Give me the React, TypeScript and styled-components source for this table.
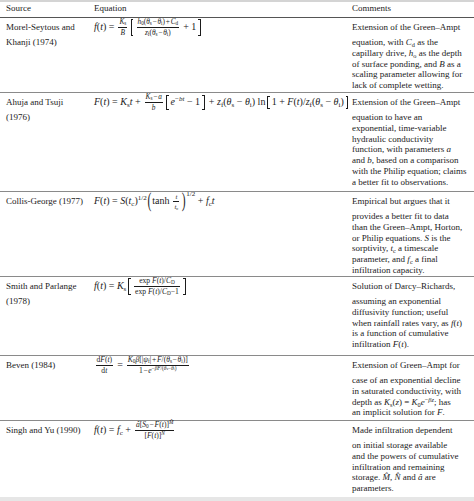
import React from "react";
import styled, { createGlobalStyle } from "styled-components";

const SERIF = `"Liberation Serif", "Times New Roman", "DejaVu Serif", serif`;

const GlobalStyle = createGlobalStyle`
  html, body { margin: 0; padding: 0; background: #fff; }
  body {
    font-family: ${SERIF};
    color: #1b1b1b;
  }
`;

const Table = styled.div`
  box-sizing: border-box;
  width: 474px;
  height: 501px;
  border-top: 2px solid #d4d4d4;
  border-bottom: 4px solid #e6e6e6;
  display: flex;
  flex-direction: column;
  font-family: ${SERIF};
  font-size: 9px;
  color: #1b1b1b;
  overflow: hidden;
`;

const Grid = styled.div`
  box-sizing: border-box;
  display: grid;
  grid-template-columns: 88px 258px 1fr;
  padding-left: 6px;
  flex: none;
`;

const HeaderRow = styled(Grid)`
  height: 16px;
  line-height: 13px;
  border-bottom: 1px solid #555;
`;

const Row = styled(Grid)<{ $h?: number; $last?: boolean }>`
  height: ${(p) => (p.$h ? `${p.$h}px` : "auto")};
  flex: ${(p) => (p.$last ? "1" : "none")};
  padding-top: 4px;
  border-bottom: ${(p) => (p.$last ? "none" : "1px solid #8a8a8a")};
`;

const Cell = styled.div`
  display: flex;
  flex-direction: column;
  min-width: 0;
`;

const Line = styled.div<{ $lead?: boolean }>`
  white-space: nowrap;
  line-height: ${(p) => (p.$lead ? "11px" : "10.8px")};
  margin-bottom: ${(p) => (p.$lead ? "4px" : "0")};
`;

const EqBox = styled.div`
  height: 11px;
  display: flex;
  align-items: center;
`;

const MathBox = styled.span`
  display: inline-block;
  white-space: nowrap;
  font-size: 10px;
  line-height: 1;
`;

const V = styled.i`
  font-style: italic;
`;

const Op = styled.span<{ $m?: number }>`
  margin: 0 ${(p) => p.$m ?? 2.5}px;
`;

const Sub = styled.span`
  font-size: 0.7em;
  line-height: 0;
  vertical-align: -0.28em;
  font-style: normal;
`;

const Sup = styled.span<{ $raise?: number }>`
  font-size: 0.7em;
  line-height: 0;
  vertical-align: ${(p) => p.$raise ?? 0.5}em;
  font-style: normal;
`;

const Frac = styled.span<{ $size?: number }>`
  display: inline-flex;
  flex-direction: column;
  align-items: stretch;
  text-align: center;
  vertical-align: middle;
  font-size: ${(p) => p.$size ?? 7.3}px;
  margin: 0 1.5px;
  line-height: 1.1;
`;

const Num = styled.span`
  padding: 0 1px 0.8px;
  border-bottom: 0.7px solid currentColor;
  white-space: nowrap;
`;

const Den = styled.span`
  padding: 0.8px 1px 0;
  white-space: nowrap;
`;

const Brk = styled.span<{ $l?: boolean; $h: number }>`
  display: inline-block;
  box-sizing: border-box;
  vertical-align: middle;
  width: 2.7px;
  height: ${(p) => p.$h}px;
  border-top: 0.8px solid currentColor;
  border-bottom: 0.8px solid currentColor;
  border-left: ${(p) => (p.$l ? "0.9px solid currentColor" : "none")};
  border-right: ${(p) => (p.$l ? "none" : "0.9px solid currentColor")};
  margin: 0 1.8px;
`;

const BigParen = styled.span`
  display: inline-block;
  vertical-align: middle;
  font-size: 11.5px;
  line-height: 1;
  transform: scaleY(1.75);
  margin: 0 0.8px;
`;

const Small = styled.span`
  font-size: 0.72em;
`;

const Ks = () => (
  <>
    <V>K</V>
    <Sub>s</Sub>
  </>
);

const ThetaDiff = ({ m }: { m?: number }) => (
  <>
    (<V>θ</V>
    <Sub>s</Sub>
    <Op $m={m}>−</Op>
    <V>θ</V>
    <Sub>i</Sub>)
  </>
);

const Ft = ({ big }: { big?: boolean }) => (
  <>
    <V>{big ? "F" : "f"}</V>(<V>t</V>)
  </>
);

type RowData = {
  source: string[];
  eq: React.ReactNode;
  comments: React.ReactNode[];
  h?: number;
};

const rows: RowData[] = [
  {
    h: 75,
    source: ["Morel-Seytous and", "Khanji (1974)"],
    eq: (
      <MathBox>
        <Ft />
        <Op>=</Op>
        <Frac>
          <Num>
            <Ks />
          </Num>
          <Den>
            <V>B</V>
          </Den>
        </Frac>
        <Brk $l $h={17} />
        <Frac>
          <Num>
            <V>h</V>
            <Sub>0</Sub>
            <ThetaDiff m={0.8} />
            <Op $m={0.8}>+</Op>
            <V>C</V>
            <Sub>d</Sub>
          </Num>
          <Den>
            <V>z</V>
            <Sub>f</Sub>
            <ThetaDiff m={0.8} />
          </Den>
        </Frac>
        <Op>+</Op>1
        <Brk $h={17} />
      </MathBox>
    ),
    comments: [
      "Extension of the Green–Ampt",
      <>
        equation, with <V>C</V>
        <Sub>d</Sub> as the
      </>,
      <>
        capillary drive, <V>h</V>
        <Sub>o</Sub> as the depth
      </>,
      <>
        of surface ponding, and <V>B</V> as a
      </>,
      "scaling parameter allowing for",
      "lack of complete wetting.",
    ],
  },
  {
    h: 99,
    source: ["Ahuja and Tsuji", "(1976)"],
    eq: (
      <MathBox>
        <Ft big />
        <Op>=</Op>
        <Ks />
        <V>t</V>
        <Op>+</Op>
        <Frac>
          <Num>
            <Ks />
            <Op $m={0.8}>−</Op>
            <V>a</V>
          </Num>
          <Den>
            <V>b</V>
          </Den>
        </Frac>
        <Brk $l $h={15} />
        <V>e</V>
        <Sup>
          −<V>bt</V>
        </Sup>
        <Op>−</Op>1
        <Brk $h={15} />
        <Op>+</Op>
        <V>z</V>
        <Sub>f</Sub>
        <ThetaDiff /> ln
        <Brk $l $h={13} />
        1<Op>+</Op>
        <Ft big />/<V>z</V>
        <Sub>f</Sub>
        <ThetaDiff />
        <Brk $h={13} />
      </MathBox>
    ),
    comments: [
      "Extension of the Green–Ampt",
      "equation to have an",
      "exponential, time-variable",
      "hydraulic conductivity",
      <>
        function, with parameters <V>a</V>
      </>,
      <>
        and <V>b</V>, based on a comparison
      </>,
      "with the Philip equation; claims",
      "a better fit to observations.",
    ],
  },
  {
    h: 85,
    source: ["Collis-George (1977)"],
    eq: (
      <MathBox>
        <Ft big />
        <Op>=</Op>
        <V>S</V>(<V>t</V>
        <Sub>c</Sub>)<Sup $raise={0.55}>1/2</Sup>
        <BigParen>(</BigParen>
        tanh&nbsp;
        <Frac $size={6.8}>
          <Num>
            <V>t</V>
          </Num>
          <Den>
            <V>t</V>
            <Sub>c</Sub>
          </Den>
        </Frac>
        <BigParen>)</BigParen>
        <Sup $raise={1.2}>1/2</Sup>
        <Op>+</Op>
        <V>f</V>
        <Sub>c</Sub>
        <V>t</V>
      </MathBox>
    ),
    comments: [
      "Empirical but argues that it",
      "provides a better fit to data",
      "than the Green–Ampt, Horton,",
      <>
        or Philip equations. <V>S</V> is the
      </>,
      <>
        sorptivity, <V>t</V>
        <Sub>c</Sub> a timescale
      </>,
      <>
        parameter, and <V>f</V>
        <Sub>c</Sub> a final
      </>,
      "infiltration capacity.",
    ],
  },
  {
    h: 79,
    source: ["Smith and Parlange", "(1978)"],
    eq: (
      <MathBox>
        <Ft />
        <Op>=</Op>
        <Ks />
        <Brk $l $h={17} />
        <Frac $size={7.6}>
          <Num>
            exp <Ft big />/<V>C</V>
            <Sub>D</Sub>
          </Num>
          <Den>
            exp <Ft big />/<V>C</V>
            <Sub>D</Sub>−1
          </Den>
        </Frac>
        <Brk $h={17} />
      </MathBox>
    ),
    comments: [
      "Solution of Darcy–Richards,",
      "assuming an exponential",
      "diffusivity function; useful",
      <>
        when rainfall rates vary, as <Ft />
      </>,
      "is a function of cumulative",
      <>
        infiltration <Ft big />.
      </>,
    ],
  },
  {
    h: 65,
    source: ["Beven (1984)"],
    eq: (
      <MathBox>
        <Frac $size={7.6}>
          <Num>
            d<Ft big />
          </Num>
          <Den>
            d<V>t</V>
          </Den>
        </Frac>
        <Op>=</Op>
        <Frac $size={7.6}>
          <Num>
            <V>K</V>
            <Sub>0</Sub>
            <V>β</V>[|<V>ψ</V>
            <Sub>f</Sub>|<Op $m={0.6}>+</Op>
            <V>F</V>/<ThetaDiff m={0.6} />]
          </Num>
          <Den>
            1<Op $m={0.6}>−</Op>
            <V>e</V>
            <Sup>
              −<V>βF</V>/(<V>θ</V>
              <Small>s</Small>−<V>θ</V>
              <Small>i</Small>)
            </Sup>
          </Den>
        </Frac>
      </MathBox>
    ),
    comments: [
      "Extension of Green–Ampt for",
      "case of an exponential decline",
      "in saturated conductivity, with",
      <>
        depth as <V>K</V>
        <Sub>s</Sub>(<V>z</V>) = <V>K</V>
        <Sub>0</Sub>
        <V>e</V>
        <Sup>
          −<V>βz</V>
        </Sup>
        ; has
      </>,
      <>
        an implicit solution for <V>F</V>.
      </>,
    ],
  },
  {
    source: ["Singh and Yu (1990)"],
    eq: (
      <MathBox>
        <Ft />
        <Op>=</Op>
        <V>f</V>
        <Sub>c</Sub>
        <Op>+</Op>
        <Frac $size={7.6}>
          <Num>
            <V>â</V>[<V>S</V>
            <Sub>0</Sub>
            <Op $m={0.8}>−</Op>
            <Ft big />]
            <Sup>
              <V>{"M\u0302"}</V>
            </Sup>
          </Num>
          <Den>
            [<Ft big />]
            <Sup>
              <V>{"N\u0302"}</V>
            </Sup>
          </Den>
        </Frac>
      </MathBox>
    ),
    comments: [
      "Made infiltration dependent",
      "on initial storage available",
      "and the powers of cumulative",
      "infiltration and remaining",
      <>
        storage. <V>{"M\u0302"}</V>, <V>{"N\u0302"}</V> and <V>â</V> are
      </>,
      "parameters.",
    ],
  },
];

export default function App() {
  return (
    <>
      <GlobalStyle />
      <Table>
        <HeaderRow>
          <div>Source</div>
          <div>Equation</div>
          <div>Comments</div>
        </HeaderRow>
        {rows.map((r, i) => (
          <Row key={i} $h={r.h} $last={i === rows.length - 1}>
            <Cell>
              {r.source.map((s, j) => (
                <Line key={j} $lead={j === 0}>
                  {s}
                </Line>
              ))}
            </Cell>
            <Cell>
              <EqBox>{r.eq}</EqBox>
            </Cell>
            <Cell>
              {r.comments.map((c, j) => (
                <Line key={j} $lead={j === 0}>
                  {c}
                </Line>
              ))}
            </Cell>
          </Row>
        ))}
      </Table>
    </>
  );
}
